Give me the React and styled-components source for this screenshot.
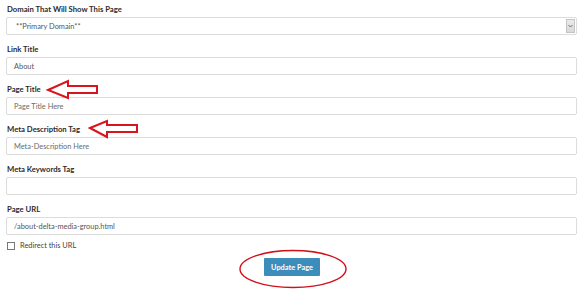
import React from "react";
import styled, {createGlobalStyle} from "styled-components";

const Global = createGlobalStyle`
  body {
    margin: 0;
    background: #fff;
    font-family: Lato, "Liberation Sans", sans-serif;
  }
`

const Page = styled.div`
  position: relative;
  width: 583px;
  height: 299px;
  padding: 4px 6px 0 6px;
  box-sizing: border-box;
  overflow: hidden;
`

const Group = styled.div`
  display: flex;
  flex-direction: column;
  margin-bottom: ${p => p.$mb || 9}px;
`

const Label = styled.label`
  font-size: 7.7px;
  line-height: 10px;
  font-weight: 700;
  color: #2b2b2b;
  margin: 0 0 3px 1px;
`

const Field = styled.div`
  height: 18px;
  box-sizing: border-box;
  border: 1px solid #dcdcdc;
  border-radius: 2px;
  display: flex;
  align-items: center;
  padding-left: ${p => p.$pl || 7}px;
  font-size: 7.4px;
  color: ${p => p.$ph ? "#6b6b6b" : "#555"};
  background: #fff;
`

const SelectField = styled(Field)`
  justify-content: space-between;
  padding-right: 1px;
`

const SelectBtn = styled.div`
  width: 9px;
  height: 14px;
  background: linear-gradient(#eaeaea, #d8d8d8);
  border: 1px solid #c4c4c4;
  box-sizing: border-box;
  display: flex;
  align-items: center;
  justify-content: center;
`

const CheckRow = styled.div`
  display: flex;
  align-items: center;
  gap: 5px;
  margin: 0 0 0 1px;
  font-size: 7.4px;
  color: #444;
`

const Box = styled.span`
  width: 8px;
  height: 8px;
  border: 1px solid #777;
  box-sizing: border-box;
  background: #fff;
`

const ButtonRow = styled.div`
  display: flex;
  justify-content: center;
  padding: 8px 0 0 1px;
`

const Button = styled.button`
  width: 56px;
  height: 18px;
  border: none;
  border-radius: 1px;
  background: #3c8dbc;
  color: #fff;
  font-family: Lato, "Liberation Sans", sans-serif;
  font-size: 7.4px;
  font-weight: 700;
  padding: 0;
`

const Overlay = styled.svg`
  position: absolute;
  left: 0;
  top: 0;
  pointer-events: none;
`

const fields = [
  {label: "Link Title", value: "About"},
  {label: "Page Title", value: "Page Title Here", ph: true},
  {label: "Meta Description Tag", value: "Meta-Description Here", ph: true},
  {label: "Meta Keywords Tag", value: ""},
  {label: "Page URL", value: "/about-delta-media-group.html"},
]

const App = () => {
  return (
    <>
      <Global/>
      <Page>
        <Group>
          <Label>Domain That Will Show This Page</Label>
          <SelectField $pl={9}>
            <span>**Primary Domain**</span>
            <SelectBtn>
              <svg width="5" height="4" viewBox="0 0 5 4">
                <path d="M0.5 1 L2.5 3 L4.5 1" fill="none" stroke="#666" strokeWidth="0.9"/>
              </svg>
            </SelectBtn>
          </SelectField>
        </Group>
        {fields.map((f, i) => (
          <Group key={f.label} $mb={i === fields.length - 1 ? 6 : 9}>
            <Label>{f.label}</Label>
            <Field $ph={f.ph}>{f.value}</Field>
          </Group>
        ))}
        <CheckRow>
          <Box/>
          <span>Redirect this URL</span>
        </CheckRow>
        <ButtonRow>
          <Button>Update Page</Button>
        </ButtonRow>
        <Overlay width="583" height="299">
          <path d="M48 90 L68 81 L68 86 L97 86 L97 93 L68 93 L68 98 Z"
                fill="none" stroke="#d8141c" strokeWidth="2" strokeLinejoin="miter"/>
          <path d="M90 128 L107 121 L107 125 L137 125 L137 132 L107 132 L107 137 Z"
                fill="none" stroke="#d8141c" strokeWidth="2" strokeLinejoin="miter"/>
          <ellipse cx="293" cy="269" rx="53" ry="18.5" fill="none" stroke="#d0101a" strokeWidth="1.4"/>
        </Overlay>
      </Page>
    </>
  )
}

export default App
